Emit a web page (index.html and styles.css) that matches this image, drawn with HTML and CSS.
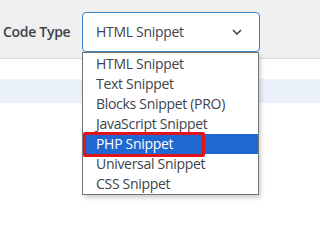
FILE: index.html
```html
<!DOCTYPE html>
<html>
<head>
<meta charset="utf-8">
<link rel="stylesheet" href="styles.css">
</head>
<body>
<div class="page">
  <div class="settings-row">
    <label class="field-label">Code Type</label>
    <div class="select-wrap">
      <div class="select">
        <span class="select-value">HTML Snippet</span>
        <svg class="chevron" width="10" height="6" viewBox="0 0 10 6"><path d="M1 1 L5 5 L9 1" fill="none" stroke="#3c434a" stroke-width="1.6"/></svg>
      </div>
      <ul class="options">
        <li class="option">HTML Snippet</li>
        <li class="option">Text Snippet</li>
        <li class="option">Blocks Snippet (PRO)</li>
        <li class="option">JavaScript Snippet</li>
        <li class="option selected">PHP Snippet<span class="annotation"></span></li>
        <li class="option">Universal Snippet</li>
        <li class="option">CSS Snippet</li>
      </ul>
    </div>
  </div>
  <div class="list">
    <div class="list-row"></div>
    <div class="list-row active"></div>
    <div class="list-row"></div>
  </div>
</div>
</body>
</html>
```
FILE: styles.css
```css
html, body {
  margin: 0;
  padding: 0;
  background: #ffffff;
  font-family: "Open Sans", "Noto Sans", sans-serif;
  color: #3c434a;
}
.page {
  height: 202px;
  overflow: hidden;
}
.settings-row {
  display: flex;
  align-items: center;
  height: 59px;
  box-sizing: border-box;
  background: #f0f0f1;
  border-bottom: 1px solid #dcdcde;
  padding: 5px 0 0 3px;
}
.field-label {
  font-size: 14px;
  font-weight: 600;
  width: 79px;
  letter-spacing: -0.3px;
}
.select-wrap {
  position: relative;
  width: 178px;
}
.select {
  height: 40px;
  box-sizing: border-box;
  border: 1px solid #3582c4;
  border-radius: 4px;
  background: #fff;
  display: flex;
  align-items: center;
  justify-content: space-between;
  padding: 0 17px 0 13px;
  font-size: 14px;
  letter-spacing: -0.3px;
}
.chevron {
  display: block;
}
.options {
  position: absolute;
  top: 40px;
  left: 0;
  width: 177px;
  box-sizing: border-box;
  margin: 0;
  padding: 1px 0 0 0;
  list-style: none;
  background: #fff;
  border: 1px solid #767676;
  box-shadow: 2px 3px 4px rgba(0,0,0,0.18);
  z-index: 2;
}
.option {
  position: relative;
  height: 20px;
  line-height: 20px;
  padding-left: 13px;
  font-size: 14px;
  letter-spacing: -0.3px;
  white-space: nowrap;
}
.option.selected {
  background: #1f67d1;
  color: #fff;
}
.annotation {
  position: absolute;
  left: 0;
  top: -2px;
  width: 122px;
  height: 25px;
  box-sizing: border-box;
  border: 3px solid #e3131c;
  border-radius: 2px;
}
.list-row {
  height: 20px;
}
.list-row.active {
  height: 24px;
  background: #eaf1fb;
}
```
